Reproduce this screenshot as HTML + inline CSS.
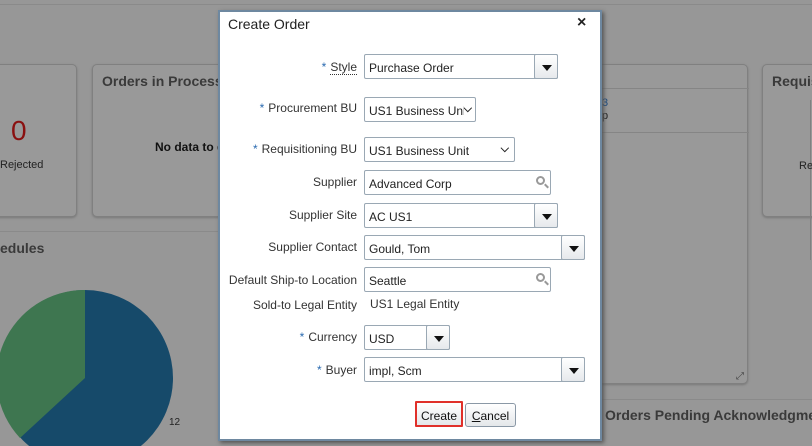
<!DOCTYPE html>
<html><head><style>
*{box-sizing:border-box;margin:0;padding:0}
html,body{background:#979797}
body{width:812px;height:446px;overflow:hidden;font-family:"Liberation Sans",Arial,sans-serif;position:relative}
.a{position:absolute}
.card{position:absolute;border:1px solid #808080;border-radius:5px;background:#999;box-shadow:0 1px 2px #777}
.t{font-weight:bold;color:#3a3a3a;font-size:14px;white-space:nowrap}
.dlg{position:absolute;left:218px;top:10px;width:384px;height:431px;background:#fff;border:2px solid #6e88a0;box-shadow:2px 2px 4px #555}
.lbl{position:absolute;right:243px;font-size:12px;color:#333;white-space:nowrap}
.lbl i{font-style:normal;color:#2a6ab0;margin-right:4px}
.in{position:absolute;left:144px;height:25px;border:1px solid #9aa8b4;border-radius:2px;font-size:12px;color:#222;padding:6px 0 0 4px;background:#fff}
.bt{position:absolute;right:-1px;top:-1px;width:24px;height:25px;border:1px solid #9aa8b4;background:linear-gradient(#fff,#e6e9ec);border-radius:2px}
.bt:after{content:"";position:absolute;left:7px;top:10px;border-left:5px solid transparent;border-right:5px solid transparent;border-top:6px solid #111}
.mg{position:absolute;right:5px;top:5px;width:9px;height:9px;border:2px solid #999;border-radius:50%}
.mg:after{content:"";position:absolute;left:6px;top:7px;width:5px;height:2px;background:#999;transform:rotate(45deg)}
.chev{position:absolute;right:5px;top:5px;font-size:11px;font-weight:bold}
.btn{position:absolute;height:24px;border:1px solid #8a98a6;border-radius:3px;background:linear-gradient(#fff,#e4e7ea);font-size:12px;color:#111;text-align:center;padding-top:5px}
</style></head><body>
<div class="a" style="left:0;top:4px;width:812px;height:1px;background:#8a8a8a"></div>
<div class="card" style="left:-10px;top:64px;width:87px;height:153px"></div>
<div class="a" style="left:11px;top:115px;font-size:28px;color:#8a1010">0</div>
<div class="a" style="left:0;top:159px;font-size:11px;color:#222">Rejected</div>
<div class="card" style="left:92px;top:64px;width:140px;height:153px"></div>
<div class="a t" style="left:102px;top:73px">Orders in Process</div>
<div class="a" style="left:155px;top:140px;font-size:12px;font-weight:bold;color:#111">No data to d</div>
<div class="a" style="left:0;top:231px;width:218px;height:1px;background:#8a8a8a"></div>
<div class="a t" style="left:0;top:240px">edules</div>
<svg class="a" style="left:0;top:290px" width="218" height="156"><circle cx="85" cy="88" r="88" fill="#164a6a"/><path d="M85 88 L85 0 A88 88 0 0 0 20 148 Z" fill="#3e7650"/><text x="169" y="135" font-size="10" fill="#222" font-family="Liberation Sans">12</text></svg>
<div class="card" style="left:560px;top:64px;width:188px;height:320px"></div>
<div class="a" style="left:600px;top:88px;width:149px;height:1px;background:#858585"></div>
<div class="a" style="left:600px;top:132px;width:149px;height:1px;background:#858585"></div>
<div class="a" style="left:602px;top:97px;font-size:11px;color:#1a4a80;line-height:13px">3<br><span style="color:#222">p</span></div>
<div class="a" style="left:736px;top:371px;font-size:10px;color:#444">⤢</div>
<div class="card" style="left:762px;top:64px;width:80px;height:153px"></div>
<div class="a t" style="left:772px;top:73px">Requis</div>
<div class="a" style="left:810px;top:100px;width:4px;height:160px;border-left:1px solid #808080"></div>
<div class="a" style="left:799px;top:160px;font-size:11px;color:#222">Re</div>
<div class="a" style="left:600px;top:399px;width:212px;height:1px;background:#8a8a8a"></div>
<div class="a t" style="left:605px;top:407px">Orders Pending Acknowledgmen</div>
<div class="a" style="left:260px;top:441px;width:340px;height:5px;border-top:1px solid #888"></div>

<div class="dlg">
<div class="a" style="left:8px;top:4px;font-size:14px;color:#222">Create Order</div>
<div class="a" style="left:357px;top:2px;font-size:16px;font-weight:bold;color:#222">×</div>

<div class="lbl" style="top:48px"><i>*</i><span style="border-bottom:1px dotted #333">Style</span></div>
<div class="in" style="top:42px;width:194px">Purchase Order<div class="bt"></div></div>

<div class="lbl" style="top:89px"><i>*</i>Procurement BU</div>
<div class="in" style="top:85px;width:112px">US1 Business Unit<span class="chev" style="right:3px;background:#fff">&#x2335;</span></div>

<div class="lbl" style="top:130px"><i>*</i>Requisitioning BU</div>
<div class="in" style="top:125px;width:151px">US1 Business Unit<span class="chev">&#x2335;</span></div>

<div class="lbl" style="top:163px">Supplier</div>
<div class="in" style="top:158px;width:187px">Advanced Corp<div class="mg"></div></div>

<div class="lbl" style="top:196px">Supplier Site</div>
<div class="in" style="top:191px;width:194px">AC US1<div class="bt"></div></div>

<div class="lbl" style="top:228px">Supplier Contact</div>
<div class="in" style="top:223px;width:221px">Gould, Tom<div class="bt"></div></div>

<div class="lbl" style="top:261px">Default Ship-to Location</div>
<div class="in" style="top:255px;width:187px">Seattle<div class="mg"></div></div>

<div class="lbl" style="top:286px">Sold-to Legal Entity</div>
<div class="a" style="left:150px;top:285px;font-size:12px;color:#333">US1 Legal Entity</div>

<div class="lbl" style="top:318px"><i>*</i>Currency</div>
<div class="in" style="top:313px;width:86px">USD<div class="bt"></div></div>

<div class="lbl" style="top:351px"><i>*</i>Buyer</div>
<div class="in" style="top:345px;width:221px">impl, Scm<div class="bt"></div></div>

<div class="btn" style="left:195px;top:389px;width:48px;border:2px solid #e0302a;border-radius:1px;height:26px;padding-top:6px">Create</div>
<div class="btn" style="left:245px;top:391px;width:51px"><u>C</u>ancel</div>
</div>
</body></html>
